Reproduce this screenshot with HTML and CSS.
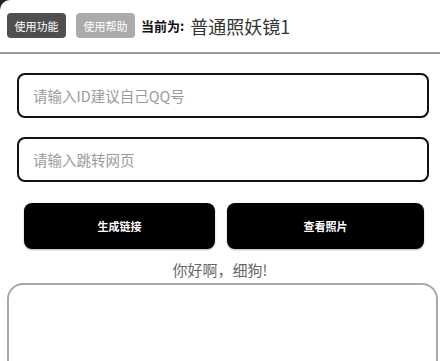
FILE: index.html
```html
<!DOCTYPE html>
<html lang="zh">
<head>
<meta charset="utf-8">
<link rel="stylesheet" href="styles.css">
</head>
<body>
<div class="frame">
  <header class="bar">
    <span class="tag tag-dark">使用功能</span>
    <span class="tag tag-light">使用帮助</span>
    <span class="label">当前为:</span>
    <span class="current">普通照妖镜1</span>
  </header>
  <main class="content">
    <div class="field"><span class="ph">请输入ID建议自己QQ号</span></div>
    <div class="field"><span class="ph">请输入跳转网页</span></div>
    <div class="actions">
      <div class="btn">生成链接</div>
      <div class="btn">查看照片</div>
    </div>
    <div class="greet">你好啊，细狗!</div>
    <div class="result"></div>
  </main>
</div>
</body>
</html>
```
FILE: styles.css
```css
* { box-sizing: border-box; }
html, body { margin: 0; padding: 0; background: #fff; }
body {
  width: 440px; height: 361px; overflow: hidden;
  font-family: "Noto Sans CJK SC", sans-serif;
}
.frame { background: #222; }
.bar {
  height: 54px;
  background: #fff;
  border-top-left-radius: 10px;
  border-bottom: 2px solid #9a9a9a;
  box-shadow: 0 1px 2px rgba(0,0,0,0.15);
  display: flex; align-items: center;
  padding: 0 0 1px 7px;
}
.tag {
  height: 25px; width: 59px;
  border-radius: 4px;
  color: #fff; font-size: 11px;
  display: flex; align-items: center; justify-content: center;
  margin-right: 10px;
}
.tag-dark { background: #4f4f4f; }
.tag-light { background: #ababab; margin-right: 6px; }
.label { font-size: 13px; font-weight: bold; color: #111; margin-right: 6px; }
.current { font-size: 18px; color: #333; }
.content { background: #fff; padding: 19px 0 0 0; height: 307px; overflow: hidden; }
.field {
  margin: 0 11px 19px 17px;
  height: 45px;
  border: 2px solid #111;
  border-radius: 8px;
  display: flex; align-items: center;
  padding-left: 14px;
}
.ph { color: #9b9b9b; font-size: 14.5px; }
.actions {
  display: flex; gap: 12px;
  margin: 21px 16px 0 24px;
}
.btn {
  flex: 1;
  height: 46px;
  background: #000;
  border-radius: 8px;
  color: #fff; font-size: 11px; font-weight: bold;
  display: flex; align-items: center; justify-content: center;
  box-shadow: 0 1px 2px rgba(0,0,0,0.3);
}
.btn:first-child { flex: 0 0 191px; }
.greet {
  text-align: center; color: #666; font-size: 15px;
  margin-top: 10px; line-height: 22px;
}
.result {
  margin: 2px 2px 0 7px;
  height: 100px;
  border: 2px solid #a8a8a8;
  border-radius: 16px;
}
```
